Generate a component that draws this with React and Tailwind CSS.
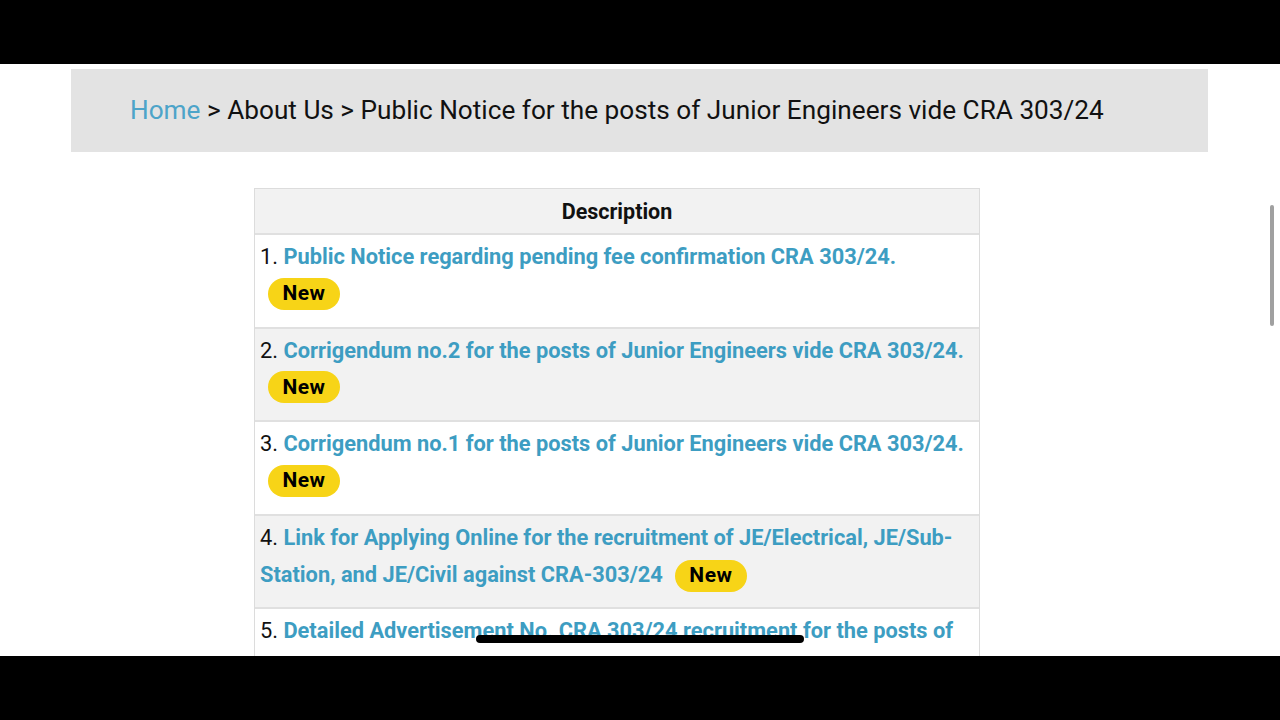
import React from "react";

const Badge = () => (
  <span className="inline-flex items-center justify-center align-middle rounded-full bg-[#f7d417] text-black font-bold text-[21px] leading-none w-[72px] h-[32px] tracking-[0.5px]">
    New
  </span>
);

const rows = [
  { n: "1.", text: "Public Notice regarding pending fee confirmation CRA 303/24.", inline: false, bg: "bg-white" },
  { n: "2.", text: "Corrigendum no.2 for the posts of Junior Engineers vide CRA 303/24.", inline: false, bg: "bg-[#f2f2f2]" },
  { n: "3.", text: "Corrigendum no.1 for the posts of Junior Engineers vide CRA 303/24.", inline: false, bg: "bg-white" },
  { n: "4.", text: "Link for Applying Online for the recruitment of JE/Electrical, JE/Sub-Station, and JE/Civil against CRA-303/24", inline: true, bg: "bg-[#f2f2f2]" },
];

export default function App() {
  return (
    <div className="w-[1280px] h-[720px] bg-black flex flex-col" style={{ fontFamily: "Roboto, 'Liberation Sans', sans-serif" }}>
      <div className="h-[64px] bg-black shrink-0" />
      <div className="h-[592px] bg-white overflow-hidden relative shrink-0">
        <div className="mt-[5px] ml-[71px] mr-[72px] h-[83px] bg-[#e3e3e3] flex items-center pl-[59px] text-[26.2px] text-[#111]">
          <span className="text-[#4da4c9]">Home</span>
          <span className="whitespace-pre"> &gt; About Us &gt; Public Notice for the posts of Junior Engineers vide CRA 303/24</span>
        </div>
        <div className="mt-[36px] ml-[254px] w-[726px] border border-[#dcdcdc]">
          <div className="h-[46px] pt-[2px] bg-[#f2f2f2] flex items-center justify-center font-bold text-[21.5px] text-[#111] border-b-2 border-[#e0e0e0]">
            Description
          </div>
          {rows.map((r, i) => (
            <div key={i} className={`${r.bg} border-b-2 border-[#e0e0e0] pl-[5px] pr-[6px] pt-[3px] pb-[14.5px] leading-[37px] text-[21.8px]`}>
              <span className="text-[#111]">{r.n} </span>
              <a className="text-[#3d9dc2] font-bold">{r.text}</a>
              {r.inline ? (
                <span className="ml-[12px]"><Badge /></span>
              ) : (
                <div className="pl-[8px] h-[37px] flex items-center">
                  <Badge />
                </div>
              )}
            </div>
          ))}
          <div className="bg-white pl-[5px] pr-[6px] pt-[3px] pb-[14.5px] leading-[37px] text-[21.8px]">
            <span className="text-[#111]">5. </span>
            <a className="text-[#3d9dc2] font-bold">Detailed Advertisement No. CRA 303/24 recruitment for the posts of Junior Engineer/Electrical, Junior Engineer/Sub-Station and Junior Engineer/Civil.</a>
          </div>
        </div>
        <div className="absolute right-[6px] top-[141px] w-[4px] h-[121px] rounded-full bg-[#a0a0a0]" />
        <div className="absolute left-[476px] top-[571px] w-[328px] h-[8px] rounded-full bg-black" />
      </div>
      <div className="h-[64px] bg-black shrink-0" />
    </div>
  );
}
